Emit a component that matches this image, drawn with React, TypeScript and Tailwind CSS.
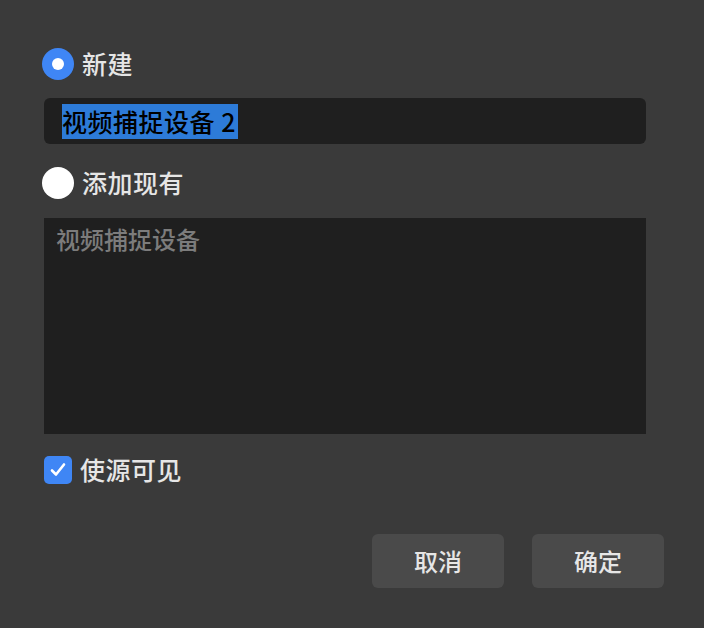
import React, { useState } from 'react';

const font = { fontFamily: '"Noto Sans CJK SC", "Noto Sans", sans-serif' };

const Radio = ({ checked }: { checked: boolean }) =>
  checked ? (
    <div className="w-8 h-8 rounded-full bg-[#3f86f5] flex items-center justify-center">
      <div className="w-3 h-3 rounded-full bg-white" />
    </div>
  ) : (
    <div className="w-8 h-8 rounded-full bg-white" />
  );

const App = () => {
  const [mode, setMode] = useState<'new' | 'existing'>('new');
  const [name, setName] = useState('视频捕捉设备 2');
  const [visible, setVisible] = useState(true);

  return (
    <div className="w-[704px] h-[628px] bg-[#3a3a3a] text-[#e6e6e6] pl-[42px] pt-12" style={font}>
      <div className="flex items-center gap-2 h-8 cursor-pointer" onClick={() => setMode('new')}>
        <Radio checked={mode === 'new'} />
        <span className="text-[25px] font-medium leading-none tracking-[0.5px] -mt-[2px]">新建</span>
      </div>

      <div className="ml-[2px] mt-[18px] w-[602px] h-[46px] rounded-md bg-[#1f1f1f] flex items-center pl-[18px]">
        <span className="bg-[#2d7bd8] text-black text-[25px] font-medium leading-[35px] tracking-[0.5px] pr-[2px]">{name}</span>
      </div>

      <div className="flex items-center gap-2 h-8 mt-[23px] cursor-pointer" onClick={() => setMode('existing')}>
        <Radio checked={mode === 'existing'} />
        <span className="text-[25px] font-medium leading-none tracking-[0.5px] -mt-[2px]">添加现有</span>
      </div>

      <div className="ml-[2px] mt-[19px] w-[602px] h-[216px] bg-[#1f1f1f] pl-3 pt-[6px]">
        <span className="text-[24px] font-medium leading-[30px] text-[#7c7c7c]">视频捕捉设备</span>
      </div>

      <div className="ml-[2px] mt-[22px] flex items-center gap-2 h-7 cursor-pointer" onClick={() => setVisible(!visible)}>
        <div className="w-7 h-7 rounded-[5px] bg-[#3f86f5] flex items-center justify-center">
          {visible && (
            <svg width="20" height="20" viewBox="0 0 20 20" fill="none">
              <path d="M4 10.5 L8 14.5 L16 4.5" stroke="white" strokeWidth="2.6" strokeLinecap="round" strokeLinejoin="round" />
            </svg>
          )}
        </div>
        <span className="text-[25px] font-medium leading-none tracking-[0.5px] -mt-[2px]">使源可见</span>
      </div>

      <div className="mt-[50px] flex justify-end gap-7 pr-[40px]">
        <button className="w-[132px] h-[54px] rounded-md bg-[#4a4a4a] text-[24px] font-medium text-[#e6e6e6]">取消</button>
        <button className="w-[132px] h-[54px] rounded-md bg-[#4a4a4a] text-[24px] font-medium text-[#e6e6e6]">确定</button>
      </div>
    </div>
  );
};

export default App;
